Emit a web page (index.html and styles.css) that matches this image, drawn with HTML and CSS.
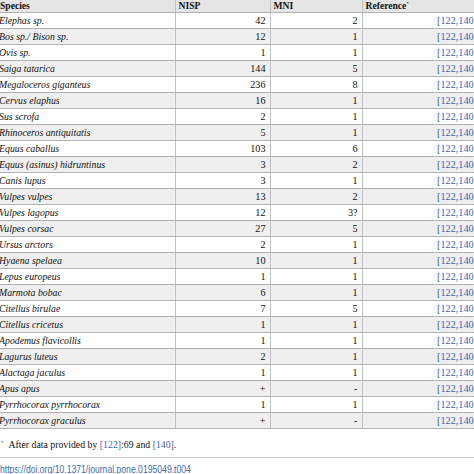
FILE: index.html
```html
<!DOCTYPE html>
<html>
<head>
<meta charset="utf-8">
<link rel="stylesheet" href="styles.css">
</head>
<body>
<div class="page">
<table class="fauna">
<colgroup><col class="c-sp"><col class="c-n"><col class="c-m"><col class="c-r"></colgroup>
<thead>
<tr><th>Species</th><th>NISP</th><th>MNI</th><th>Reference<sup>*</sup></th></tr>
</thead>
<tbody>
<tr><td class="sp">Elephas sp.</td><td class="num">42</td><td class="num">2</td><td class="ref"><a>[122,140]</a></td></tr>
<tr><td class="sp">Bos sp./ Bison sp.</td><td class="num">12</td><td class="num">1</td><td class="ref"><a>[122,140]</a></td></tr>
<tr><td class="sp">Ovis sp.</td><td class="num">1</td><td class="num">1</td><td class="ref"><a>[122,140]</a></td></tr>
<tr><td class="sp">Saiga tatarica</td><td class="num">144</td><td class="num">5</td><td class="ref"><a>[122,140]</a></td></tr>
<tr><td class="sp">Megaloceros giganteus</td><td class="num">236</td><td class="num">8</td><td class="ref"><a>[122,140]</a></td></tr>
<tr><td class="sp">Cervus elaphus</td><td class="num">16</td><td class="num">1</td><td class="ref"><a>[122,140]</a></td></tr>
<tr><td class="sp">Sus scrofa</td><td class="num">2</td><td class="num">1</td><td class="ref"><a>[122,140]</a></td></tr>
<tr><td class="sp">Rhinoceros antiquitatis</td><td class="num">5</td><td class="num">1</td><td class="ref"><a>[122,140]</a></td></tr>
<tr><td class="sp">Equus caballus</td><td class="num">103</td><td class="num">6</td><td class="ref"><a>[122,140]</a></td></tr>
<tr><td class="sp">Equus (asinus) hidruntinus</td><td class="num">3</td><td class="num">2</td><td class="ref"><a>[122,140]</a></td></tr>
<tr><td class="sp">Canis lupus</td><td class="num">3</td><td class="num">1</td><td class="ref"><a>[122,140]</a></td></tr>
<tr><td class="sp">Vulpes vulpes</td><td class="num">13</td><td class="num">2</td><td class="ref"><a>[122,140]</a></td></tr>
<tr><td class="sp">Vulpes lagopus</td><td class="num">12</td><td class="num">3?</td><td class="ref"><a>[122,140]</a></td></tr>
<tr><td class="sp">Vulpes corsac</td><td class="num">27</td><td class="num">5</td><td class="ref"><a>[122,140]</a></td></tr>
<tr><td class="sp">Ursus arctors</td><td class="num">2</td><td class="num">1</td><td class="ref"><a>[122,140]</a></td></tr>
<tr><td class="sp">Hyaena spelaea</td><td class="num">10</td><td class="num">1</td><td class="ref"><a>[122,140]</a></td></tr>
<tr><td class="sp">Lepus europeus</td><td class="num">1</td><td class="num">1</td><td class="ref"><a>[122,140]</a></td></tr>
<tr><td class="sp">Marmota bobac</td><td class="num">6</td><td class="num">1</td><td class="ref"><a>[122,140]</a></td></tr>
<tr><td class="sp">Citellus birulae</td><td class="num">7</td><td class="num">5</td><td class="ref"><a>[122,140]</a></td></tr>
<tr><td class="sp">Citellus cricetus</td><td class="num">1</td><td class="num">1</td><td class="ref"><a>[122,140]</a></td></tr>
<tr><td class="sp">Apodemus flavicollis</td><td class="num">1</td><td class="num">1</td><td class="ref"><a>[122,140]</a></td></tr>
<tr><td class="sp">Lagurus luteus</td><td class="num">2</td><td class="num">1</td><td class="ref"><a>[122,140]</a></td></tr>
<tr><td class="sp">Alactaga jaculus</td><td class="num">1</td><td class="num">1</td><td class="ref"><a>[122,140]</a></td></tr>
<tr><td class="sp">Apus apus</td><td class="num">+</td><td class="num">-</td><td class="ref"><a>[122,140]</a></td></tr>
<tr><td class="sp">Pyrrhocorax pyrrhocorax</td><td class="num">1</td><td class="num">1</td><td class="ref"><a>[122,140]</a></td></tr>
<tr><td class="sp">Pyrrhocorax graculus</td><td class="num">+</td><td class="num">-</td><td class="ref"><a>[122,140]</a></td></tr>
</tbody>
</table>
<p class="note"><sup>*</sup> After data provided by <a>[122]</a>:69 and <a>[140]</a>.</p>
<p class="doi"><a>https://doi.org/10.1371/journal.pone.0195049.t004</a></p>
</div>
</body>
</html>
```
FILE: styles.css
```css
html, body {
  margin: 0;
  padding: 0;
  background: #fff;
}
.page {
  width: 474px;
  height: 474px;
  overflow: hidden;
  font-family: "Liberation Serif", "Times New Roman", serif;
  color: #111;
}
.fauna {
  border-collapse: collapse;
  table-layout: fixed;
  width: 484px;
  margin-left: -3px;
  font-size: 10.2px;
}
.c-sp { width: 178px; }
.c-n { width: 95px; }
.c-m { width: 92px; }
.c-r { width: 119px; }
.fauna th {
  background: #e5e5e5;
  font-weight: bold;
  font-size: 9.6px;
  text-align: left;
  height: 12px;
  line-height: 12px;
  padding: 0 3px;
  border-bottom: 1px solid #b2b2b2;
  border-left: 1px solid #c0c0c0;
}
.fauna th:first-child, .fauna td:first-child { border-left: none; }
.fauna th sup { font-size: 5px; vertical-align: 4px; line-height: 0; font-weight: normal; }
.fauna td {
  height: 15px;
  line-height: 15px;
  padding: 0 4px 0 3px;
  border-bottom: 1px solid #b2b2b2;
  border-left: 1px solid #c0c0c0;
  white-space: nowrap;
}
.fauna tbody tr:nth-child(even) td { background: #efefef; }
.fauna td.sp {
  font-style: italic;
  font-size: 9.8px;
  padding-left: 2px;
}
.fauna td.num { text-align: right; }
.fauna td.ref { text-align: right; }
a { color: #3f63ab; text-decoration: none; }
.note {
  margin: 0;
  padding: 8px 0 0 0;
  font-size: 9.8px;
  line-height: 16px;
}
.note sup { font-size: 5px; vertical-align: 4px; line-height: 0; margin-right: 3px; margin-left: 1px; }
.doi {
  margin: 4px 0 0;
  border-top: 1px solid #c8c8c8;
  padding: 4px 0 0 0;
  font-family: "Liberation Sans", Arial, sans-serif;
  font-size: 11.5px;
  line-height: 14px;
  white-space: nowrap;
}
.doi a {
  display: inline-block;
  color: #3b6cb0;
  transform: scaleX(0.75);
  transform-origin: left center;
}
```
